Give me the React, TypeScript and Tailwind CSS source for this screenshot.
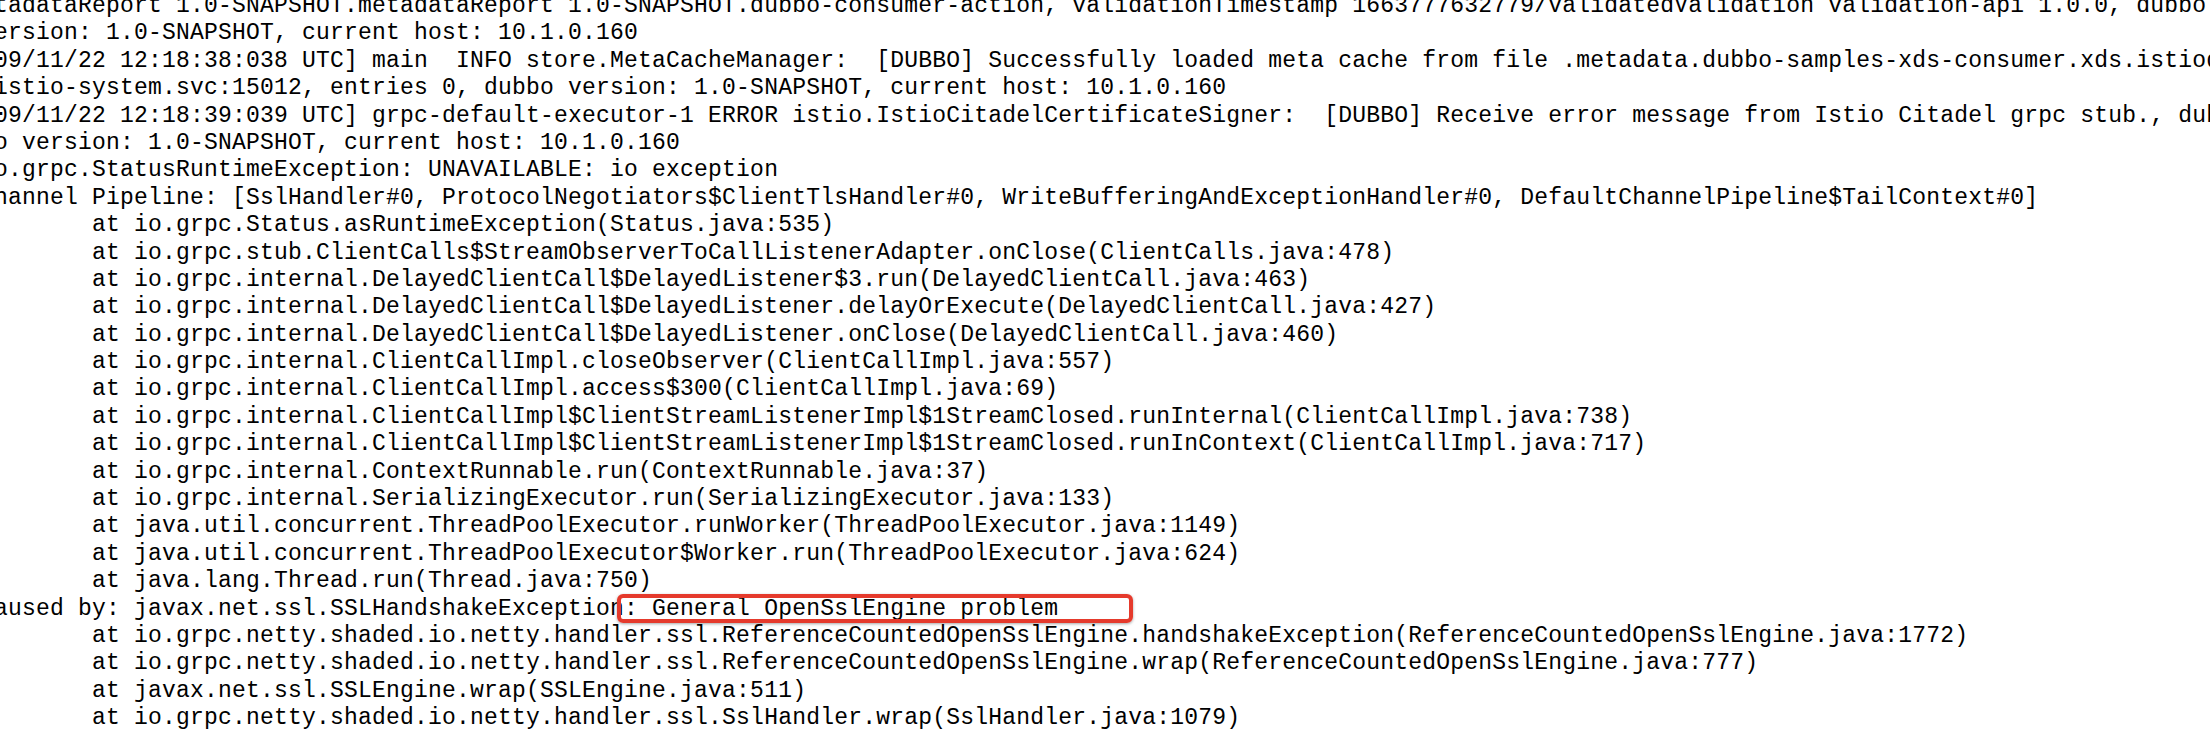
import React from "react";

const T = "        ";

const lines: string[] = [
  "etadataReport 1.0-SNAPSHOT.metadataReport 1.0-SNAPSHOT.dubbo-consumer-action, validationTimestamp 1663777632779/validatedValidation validation-api 1.0.0, dubbo ",
  "version: 1.0-SNAPSHOT, current host: 10.1.0.160",
  "[09/11/22 12:18:38:038 UTC] main  INFO store.MetaCacheManager:  [DUBBO] Successfully loaded meta cache from file .metadata.dubbo-samples-xds-consumer.xds.istiod",
  ".istio-system.svc:15012, entries 0, dubbo version: 1.0-SNAPSHOT, current host: 10.1.0.160",
  "[09/11/22 12:18:39:039 UTC] grpc-default-executor-1 ERROR istio.IstioCitadelCertificateSigner:  [DUBBO] Receive error message from Istio Citadel grpc stub., dubb",
  "bo version: 1.0-SNAPSHOT, current host: 10.1.0.160",
  "io.grpc.StatusRuntimeException: UNAVAILABLE: io exception",
  "Channel Pipeline: [SslHandler#0, ProtocolNegotiators$ClientTlsHandler#0, WriteBufferingAndExceptionHandler#0, DefaultChannelPipeline$TailContext#0]",
  T + "at io.grpc.Status.asRuntimeException(Status.java:535)",
  T + "at io.grpc.stub.ClientCalls$StreamObserverToCallListenerAdapter.onClose(ClientCalls.java:478)",
  T + "at io.grpc.internal.DelayedClientCall$DelayedListener$3.run(DelayedClientCall.java:463)",
  T + "at io.grpc.internal.DelayedClientCall$DelayedListener.delayOrExecute(DelayedClientCall.java:427)",
  T + "at io.grpc.internal.DelayedClientCall$DelayedListener.onClose(DelayedClientCall.java:460)",
  T + "at io.grpc.internal.ClientCallImpl.closeObserver(ClientCallImpl.java:557)",
  T + "at io.grpc.internal.ClientCallImpl.access$300(ClientCallImpl.java:69)",
  T + "at io.grpc.internal.ClientCallImpl$ClientStreamListenerImpl$1StreamClosed.runInternal(ClientCallImpl.java:738)",
  T + "at io.grpc.internal.ClientCallImpl$ClientStreamListenerImpl$1StreamClosed.runInContext(ClientCallImpl.java:717)",
  T + "at io.grpc.internal.ContextRunnable.run(ContextRunnable.java:37)",
  T + "at io.grpc.internal.SerializingExecutor.run(SerializingExecutor.java:133)",
  T + "at java.util.concurrent.ThreadPoolExecutor.runWorker(ThreadPoolExecutor.java:1149)",
  T + "at java.util.concurrent.ThreadPoolExecutor$Worker.run(ThreadPoolExecutor.java:624)",
  T + "at java.lang.Thread.run(Thread.java:750)",
  "Caused by: javax.net.ssl.SSLHandshakeException: General OpenSslEngine problem",
  T + "at io.grpc.netty.shaded.io.netty.handler.ssl.ReferenceCountedOpenSslEngine.handshakeException(ReferenceCountedOpenSslEngine.java:1772)",
  T + "at io.grpc.netty.shaded.io.netty.handler.ssl.ReferenceCountedOpenSslEngine.wrap(ReferenceCountedOpenSslEngine.java:777)",
  T + "at javax.net.ssl.SSLEngine.wrap(SSLEngine.java:511)",
  T + "at io.grpc.netty.shaded.io.netty.handler.ssl.SslHandler.wrap(SslHandler.java:1079)",
];

export default function App() {
  return (
    <div className="w-[2210px] h-[730px] overflow-hidden bg-white">
      <div
        className="ml-[-20px] mt-[-7px] text-[23px] leading-[27.4px] tracking-[0.2px] text-black"
        style={{ fontFamily: '"Liberation Mono", "DejaVu Sans Mono", monospace' }}
      >
        {lines.map((l, i) => (
          <div key={i} className="relative whitespace-pre h-[27.4px]">
            {l}
            {i === 22 && (
              <div className="absolute left-[637px] top-[-2px] w-[516px] h-[29px] rounded-[6px] border-4 border-[#e53a2c] shadow-[0_1px_3px_rgba(0,0,0,0.35)]" />
            )}
          </div>
        ))}
      </div>
    </div>
  );
}
